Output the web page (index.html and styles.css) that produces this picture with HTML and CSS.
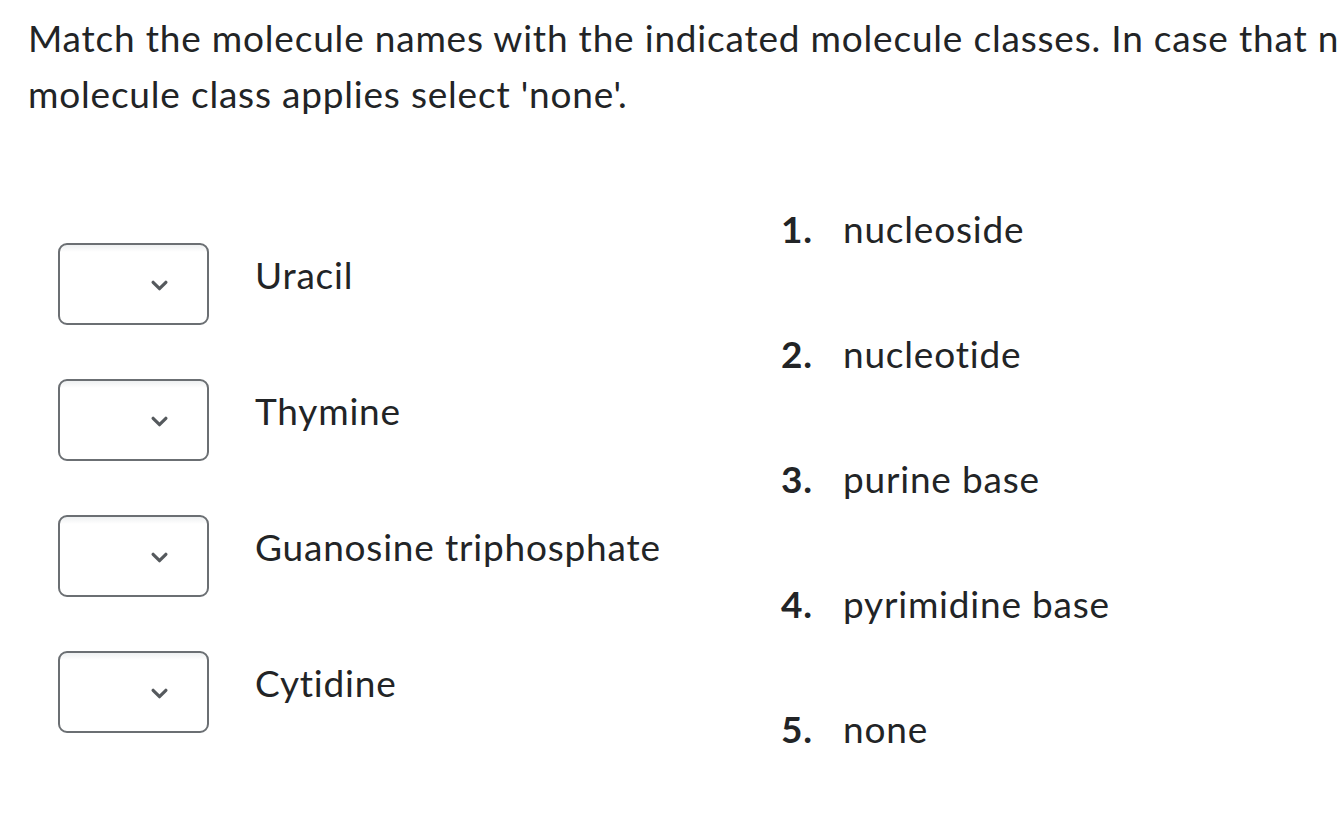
FILE: index.html
```html
<!DOCTYPE html>
<html lang="en">
<head>
    <meta charset="UTF-8">
    <meta name="viewport" content="width=device-width, initial-scale=1.0">
    <title>Matching Question</title>
    <link rel="stylesheet" href="styles.css">
</head>
<body>
    <div class="question">
        <p class="question-text">Match the molecule names with the indicated molecule classes. In case that no molecule class applies select 'none'.</p>

        <div class="matching">
            <div class="answers">
                <div class="answer-row">
                    <div class="dropdown">
                        <select aria-label="Uracil">
                            <option value=""></option>
                            <option>1</option><option>2</option><option>3</option><option>4</option><option>5</option>
                        </select>
                        <svg class="chevron" viewBox="0 0 16 10"><path d="M2 2 L8 8 L14 2"/></svg>
                    </div>
                    <span class="answer-label">Uracil</span>
                </div>
                <div class="answer-row">
                    <div class="dropdown">
                        <select aria-label="Thymine">
                            <option value=""></option>
                            <option>1</option><option>2</option><option>3</option><option>4</option><option>5</option>
                        </select>
                        <svg class="chevron" viewBox="0 0 16 10"><path d="M2 2 L8 8 L14 2"/></svg>
                    </div>
                    <span class="answer-label">Thymine</span>
                </div>
                <div class="answer-row">
                    <div class="dropdown">
                        <select aria-label="Guanosine triphosphate">
                            <option value=""></option>
                            <option>1</option><option>2</option><option>3</option><option>4</option><option>5</option>
                        </select>
                        <svg class="chevron" viewBox="0 0 16 10"><path d="M2 2 L8 8 L14 2"/></svg>
                    </div>
                    <span class="answer-label">Guanosine triphosphate</span>
                </div>
                <div class="answer-row">
                    <div class="dropdown">
                        <select aria-label="Cytidine">
                            <option value=""></option>
                            <option>1</option><option>2</option><option>3</option><option>4</option><option>5</option>
                        </select>
                        <svg class="chevron" viewBox="0 0 16 10"><path d="M2 2 L8 8 L14 2"/></svg>
                    </div>
                    <span class="answer-label">Cytidine</span>
                </div>
            </div>

            <ol class="choices">
                <li><span class="num">1.</span>nucleoside</li>
                <li><span class="num">2.</span>nucleotide</li>
                <li><span class="num">3.</span>purine base</li>
                <li><span class="num">4.</span>pyrimidine base</li>
                <li><span class="num">5.</span>none</li>
            </ol>
        </div>
    </div>
</body>
</html>
```

FILE: styles.css
```css
body {
    margin: 0;
    font-family: Lato, "Open Sans", sans-serif;
    font-size: 37px;
    letter-spacing: 0.8px;
    font-variant-ligatures: none;
    color: #222426;
    background: #fff;
    overflow: hidden;
}
.question {
    padding-left: 28px;
}
.question-text {
    width: 1400px;
    margin: 10px 0 0;
    line-height: 56px;
}
.matching {
    display: flex;
    margin-top: 121px;
}
.answers {
    width: 723px;
    padding-left: 30px;
    display: flex;
    flex-direction: column;
    gap: 54px;
}
.answer-row {
    display: flex;
    align-items: flex-start;
}
.dropdown {
    position: relative;
    width: 151px;
    height: 82px;
    flex-shrink: 0;
}
.dropdown select {
    appearance: none;
    -webkit-appearance: none;
    width: 100%;
    height: 100%;
    border: 2px solid #6b6f73;
    border-radius: 9px;
    background: linear-gradient(#eef0f1, #fff 7px);
    font: inherit;
    color: inherit;
    cursor: pointer;
}
.chevron {
    position: absolute;
    left: 93px;
    top: 37px;
    width: 17px;
    height: 11px;
    fill: none;
    stroke: #55595d;
    stroke-width: 3;
    stroke-linecap: round;
    stroke-linejoin: round;
    pointer-events: none;
}
.answer-label {
    margin-left: 46px;
    margin-top: 10px;
    line-height: 44px;
}
.choices {
    list-style: none;
    margin: -36px 0 0;
    padding: 0;
}
.choices li {
    line-height: 44px;
    margin-bottom: 81px;
}
.num {
    display: inline-block;
    width: 62px;
    font-weight: bold;
}
```
